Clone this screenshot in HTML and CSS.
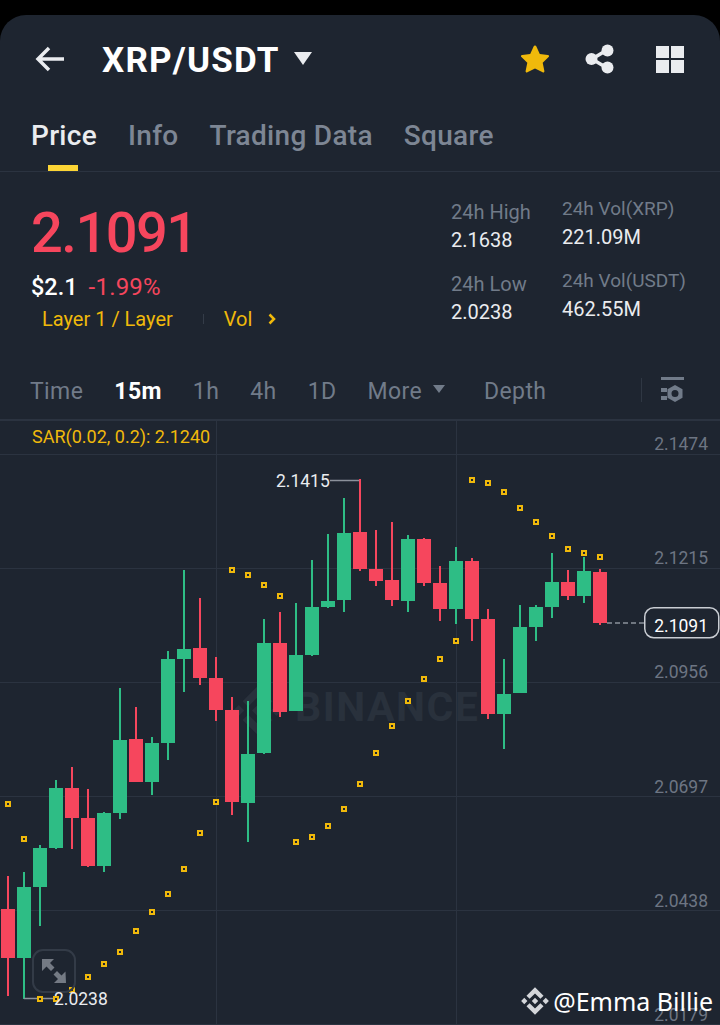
FILE: index.html
```html
<!DOCTYPE html>
<html lang="en">

<head>
    <meta charset="UTF-8">
    <meta name="viewport" content="width=device-width, initial-scale=1.0">
    <title>XRP/USDT</title>
    <link rel="stylesheet" href="styles.css">
</head>

<body>
    <div class="screen">
        <div class="topbar">
            <svg class="back" viewBox="0 0 30 26"><path d="M29 13H3M14 2L3 13l11 11"/></svg>
            <div class="pair">XRP/USDT</div>
            <div class="caret"></div>
            <div class="top_icons">
                <svg class="star" viewBox="0 0 30 30"><path d="M15 1.500c.7 0 1.100.4 1.400 1l3.400 7.500 8 .9c1.300.2 1.700 1.300.8 2.200l-5.900 5.600 1.700 8.200c.2 1.200-.8 1.900-1.800 1.300L15 24.600l-7.600 3.600c-1 .6-2-.1-1.800-1.300l1.700-8.200-5.900-5.600c-.9-.9-.5-2 .8-2.200l8-.9 3.400-7.500c.3-.6.700-1 1.400-1z"/></svg>
                <svg class="share" viewBox="0 0 30 30"><path d="M7 15L22 6M7 15l15 9"/><circle cx="6.500" cy="15" r="6"/><circle cx="22.500" cy="6.500" r="6"/><circle cx="22.500" cy="23.500" r="6"/></svg>
                <div class="grid_icon"><span></span><span></span><span></span><span></span></div>
            </div>
        </div>

        <ul class="tabs">
            <li class="active">Price</li>
            <li>Info</li>
            <li>Trading Data</li>
            <li>Square</li>
        </ul>

        <div class="summary">
            <div class="price_box">
                <div class="last">2.1091</div>
                <div class="sub"><span class="usd">$2.1</span><span class="pct">-1.99%</span></div>
                <div class="tags">
                    <span>Layer 1 / Layer</span>
                    <i class="sep"></i>
                    <span>Vol</span>
                    <svg class="chev" viewBox="0 0 8 12"><path d="M1.500 1.500L6 6l-4.500 4.500"/></svg>
                </div>
            </div>
            <div class="stats">
                <dl>
                    <dt>24h High</dt>
                    <dd>2.1638</dd>
                    <dt>24h Low</dt>
                    <dd>2.0238</dd>
                </dl>
                <dl class="stats_vol">
                    <dt>24h Vol(XRP)</dt>
                    <dd>221.09M</dd>
                    <dt>24h Vol(USDT)</dt>
                    <dd>462.55M</dd>
                </dl>
            </div>
        </div>

        <ul class="times">
            <li>Time</li>
            <li class="on">15m</li>
            <li>1h</li>
            <li>4h</li>
            <li>1D</li>
            <li class="more">More<i class="caret_sm"></i></li>
            <li class="depth">Depth</li>
            <li class="tools">
                <svg viewBox="0 0 24 26"><path d="M1 0h23v3H1zM1 11h6v4H1zM1 19h6v4H1z"/><path fill-rule="evenodd" d="M15 8l7.500 4.300v8.400L15 25l-7.500-4.300v-8.400zM15 13a3.500 3.500 0 100 7 3.500 3.500 0 000-7z"/></svg>
            </li>
        </ul>

        <div class="chart">
            <svg class="plot" viewBox="0 421 720 604">
                <defs>
                    <g id="bn">
                        <path d="M38.730 53.200L63 28.930l24.280 24.280 14.120-14.120L63 .69 24.610 39.080zM.6 63l14.120-14.120L28.840 63 14.720 77.120zM38.730 72.800L63 97.070l24.280-24.280 14.120 14.110L63 125.310 24.610 86.920zM97.280 63l14.120-14.120L125.520 63 111.400 77.120zM63 48.700L77.300 63 63 77.300 48.700 63z"/>
                    </g>
                </defs>

                <!-- grid -->
                <path class="grid" d="M0 454.500H720M0 568.500H720M0 682.500H720M0 796.500H720M0 910.500H720M0 1024.500H720M216.500 421V1025M456.500 421V1025"/>

                <!-- watermark -->
                <use class="wm" href="#bn" transform="translate(233 686) scale(.39)"/>
                <text class="wm" x="295" y="721">BINANCE</text>

                <!-- candles -->
                <g class="down"><rect class="wick" x="7" y="876" height="120"/><rect class="body" x="1" y="909" height="49"/></g>
                <g class="up"><rect class="wick" x="23" y="872" height="127"/><rect class="body" x="17" y="887" height="71"/></g>
                <g class="up"><rect class="wick" x="39" y="845" height="81"/><rect class="body" x="33" y="848" height="39"/></g>
                <g class="up"><rect class="wick" x="55" y="780" height="69"/><rect class="body" x="49" y="788" height="60"/></g>
                <g class="down"><rect class="wick" x="71" y="767" height="82"/><rect class="body" x="65" y="788" height="30"/></g>
                <g class="down"><rect class="wick" x="87" y="789" height="78"/><rect class="body" x="81" y="818" height="48"/></g>
                <g class="up"><rect class="wick" x="103" y="812" height="60"/><rect class="body" x="97" y="813" height="53"/></g>
                <g class="up"><rect class="wick" x="119" y="688" height="131"/><rect class="body" x="113" y="740" height="73"/></g>
                <g class="down"><rect class="wick" x="135" y="707" height="75"/><rect class="body" x="129" y="739" height="43"/></g>
                <g class="up"><rect class="wick" x="151" y="737" height="58"/><rect class="body" x="145" y="743" height="39"/></g>
                <g class="up"><rect class="wick" x="167" y="651" height="109"/><rect class="body" x="161" y="659" height="84"/></g>
                <g class="up"><rect class="wick" x="183" y="570" height="122"/><rect class="body" x="177" y="649" height="10"/></g>
                <g class="down"><rect class="wick" x="199" y="598" height="87"/><rect class="body" x="193" y="648" height="30"/></g>
                <g class="down"><rect class="wick" x="215" y="657" height="64"/><rect class="body" x="209" y="678" height="32"/></g>
                <g class="down"><rect class="wick" x="231" y="697" height="118"/><rect class="body" x="225" y="710" height="92"/></g>
                <g class="up"><rect class="wick" x="247" y="701" height="141"/><rect class="body" x="241" y="754" height="49"/></g>
                <g class="up"><rect class="wick" x="263" y="619" height="135"/><rect class="body" x="257" y="643" height="110"/></g>
                <g class="down"><rect class="wick" x="279" y="612" height="105"/><rect class="body" x="273" y="643" height="69"/></g>
                <g class="up"><rect class="wick" x="295" y="603" height="108"/><rect class="body" x="289" y="655" height="56"/></g>
                <g class="up"><rect class="wick" x="311" y="560" height="96"/><rect class="body" x="305" y="607" height="48"/></g>
                <g class="up"><rect class="wick" x="327" y="534" height="74"/><rect class="body" x="321" y="601" height="6"/></g>
                <g class="up"><rect class="wick" x="343" y="498" height="114"/><rect class="body" x="337" y="533" height="67"/></g>
                <g class="down"><rect class="wick" x="359" y="479" height="92"/><rect class="body" x="353" y="532" height="37"/></g>
                <g class="down"><rect class="wick" x="375" y="530" height="56"/><rect class="body" x="369" y="569" height="12"/></g>
                <g class="down"><rect class="wick" x="391" y="522" height="84"/><rect class="body" x="385" y="580" height="20"/></g>
                <g class="up"><rect class="wick" x="407" y="535" height="77"/><rect class="body" x="401" y="539" height="62"/></g>
                <g class="down"><rect class="wick" x="423" y="538" height="48"/><rect class="body" x="417" y="539" height="44"/></g>
                <g class="down"><rect class="wick" x="439" y="566" height="55"/><rect class="body" x="433" y="583" height="26"/></g>
                <g class="up"><rect class="wick" x="455" y="547" height="77"/><rect class="body" x="449" y="561" height="48"/></g>
                <g class="down"><rect class="wick" x="471" y="558" height="83"/><rect class="body" x="465" y="561" height="58"/></g>
                <g class="down"><rect class="wick" x="487" y="609" height="110"/><rect class="body" x="481" y="619" height="95"/></g>
                <g class="up"><rect class="wick" x="503" y="659" height="90"/><rect class="body" x="497" y="694" height="20"/></g>
                <g class="up"><rect class="wick" x="519" y="605" height="88"/><rect class="body" x="513" y="627" height="66"/></g>
                <g class="up"><rect class="wick" x="535" y="605" height="36"/><rect class="body" x="529" y="607" height="20"/></g>
                <g class="up"><rect class="wick" x="551" y="553" height="65"/><rect class="body" x="545" y="582" height="25"/></g>
                <g class="down"><rect class="wick" x="567" y="570" height="30"/><rect class="body" x="561" y="582" height="14"/></g>
                <g class="up"><rect class="wick" x="583" y="557" height="46"/><rect class="body" x="577" y="571" height="25"/></g>
                <g class="down"><rect class="wick" x="599" y="569" height="56"/><rect class="body" x="593" y="572" height="51"/></g>

                <!-- high / low marks -->
                <path class="mark" d="M330 480.500H359M24 998.500H54"/>
                <text class="mark_text" x="276" y="487">2.1415</text>

                <!-- SAR dots -->
                <rect class="sar" x="6" y="802"/><rect class="sar" x="22" y="837"/><rect class="sar" x="38" y="997"/><rect class="sar" x="54" y="997"/>
                <rect class="sar" x="70" y="988"/><rect class="sar" x="86" y="975"/><rect class="sar" x="102" y="962"/><rect class="sar" x="118" y="950"/>
                <rect class="sar" x="134" y="929"/><rect class="sar" x="150" y="910"/><rect class="sar" x="166" y="892"/><rect class="sar" x="182" y="867"/>
                <rect class="sar" x="198" y="831"/><rect class="sar" x="214" y="800"/><rect class="sar" x="230" y="568"/><rect class="sar" x="246" y="573"/>
                <rect class="sar" x="262" y="583"/><rect class="sar" x="278" y="594"/><rect class="sar" x="294" y="840"/><rect class="sar" x="310" y="835"/>
                <rect class="sar" x="326" y="824"/><rect class="sar" x="342" y="807"/><rect class="sar" x="358" y="782"/><rect class="sar" x="374" y="751"/>
                <rect class="sar" x="390" y="724"/><rect class="sar" x="406" y="699"/><rect class="sar" x="422" y="677"/><rect class="sar" x="438" y="657"/>
                <rect class="sar" x="454" y="639"/><rect class="sar" x="470" y="478"/><rect class="sar" x="486" y="481"/><rect class="sar" x="502" y="490"/>
                <rect class="sar" x="518" y="506"/><rect class="sar" x="534" y="520"/><rect class="sar" x="550" y="534"/><rect class="sar" x="566" y="547"/>
                <rect class="sar" x="582" y="551"/><rect class="sar" x="598" y="555"/>

                <!-- expand button -->
                <rect class="expand" x="33" y="950" width="42" height="42" rx="10"/>
                <path class="expand_arrow" d="M42 959h12l-4 4 4.500 4.500-3.500 3.500-4.500-4.500-4.500 4.500zM66 983H54l4-4-4.500-4.500 3.500-3.500 4.500 4.500 4-4z"/>
                <text class="mark_text" x="54" y="1005">2.0238</text>

                <!-- axis -->
                <text class="axis" x="708" y="450">2.1474</text>
                <text class="axis" x="708" y="564">2.1215</text>
                <text class="axis" x="708" y="678">2.0956</text>
                <text class="axis" x="708" y="793">2.0697</text>
                <text class="axis" x="708" y="907">2.0438</text>
                <text class="axis" x="708" y="1021">2.0179</text>

                <!-- last price -->
                <path class="last_line" d="M607 623H644"/>
                <rect class="last_tag" x="644.750" y="607.750" width="74" height="30" rx="9"/>
                <text class="last_text" x="708" y="632">2.1091</text>
            </svg>

            <div class="sar_label">SAR(0.02, 0.2): 2.1240</div>

            <div class="credit">
                <svg viewBox="0 0 126 126"><use href="#bn"/></svg>
                <span>@Emma Billie</span>
            </div>
        </div>
    </div>
</body>

</html>
```

FILE: styles.css
```css
* {
    padding: 0;
    margin: 0;
    list-style: none;
    box-sizing: border-box;
}

html,
body {
    background: #000;
    overflow: hidden;
}

body {
    font-family: Roboto, "Noto Sans", sans-serif;
    color: #eaecef;
}

.screen {
    height: 1010px;
    margin-top: 15px;
    background: #1e2530;
    border-radius: 26px 26px 0 0;
    overflow: hidden;
}

/* top bar */
.topbar {
    display: flex;
    align-items: center;
    height: 90px;
    padding: 0 36px 0 35px;
}

.back {
    width: 30px;
    height: 26px;
    margin: -2px 37px 0 0;
    fill: none;
    stroke: #eaecef;
    stroke-width: 3.5;
}

.pair {
    font-size: 35px;
    font-weight: 700;
    letter-spacing: 1.200px;
    color: #fff;
}

.caret {
    width: 0;
    height: 0;
    margin: -3px 0 0 14px;
    border-left: 9.500px solid transparent;
    border-right: 9.500px solid transparent;
    border-top: 13px solid #eaecef;
}

.top_icons {
    display: flex;
    align-items: center;
    margin: -2px 0 0 auto;
}

.star {
    width: 30px;
    height: 30px;
    fill: #f0b90b;
}

.share {
    width: 30px;
    height: 30px;
    margin-left: 35px;
    fill: #eaecef;
    stroke: #eaecef;
    stroke-width: 0;
}

.share path {
    fill: none;
    stroke-width: 3.5;
}

.grid_icon {
    display: grid;
    grid-template-columns: 13px 13px;
    grid-template-rows: 12.500px 12.500px;
    gap: 2px;
    margin-left: 41px;
}

.grid_icon span {
    background: #eaecef;
}

/* tabs */
.tabs {
    display: flex;
    gap: 31px;
    height: 67px;
    padding: 14px 0 0 31px;
    border-bottom: 1px solid #2b3340;
    font-size: 28px;
    font-weight: 500;
    letter-spacing: .3px;
    color: #7d8694;
}

.tabs li {
    position: relative;
}

.tabs .active {
    color: #eaecef;
}

.tabs .active::after {
    content: "";
    position: absolute;
    left: 17px;
    bottom: 0;
    width: 30px;
    height: 6px;
    background: #fcd535;
}

/* price summary */
.summary {
    display: flex;
    height: 189px;
}

.price_box {
    width: 451px;
    padding: 28px 0 0 31px;
}

.last {
    font-size: 56px;
    font-weight: 500;
    line-height: 66px;
    letter-spacing: -1.500px;
    color: #f6465d;
}

.sub {
    display: flex;
    align-items: center;
    gap: 11px;
    height: 32px;
    margin-top: 5px;
}

.usd {
    font-size: 23.500px;
    font-weight: 500;
    color: #fff;
}

.pct {
    font-size: 24px;
    letter-spacing: .2px;
    color: #f6465d;
}

.tags {
    display: flex;
    align-items: center;
    height: 30px;
    margin: 1px 0 0 11px;
    font-size: 20px;
    color: #f0b90b;
}

.sep {
    width: 1px;
    height: 10px;
    margin: 0 20px 0 30px;
    background: #343c48;
}

.chev {
    width: 8px;
    height: 12px;
    margin-left: 16px;
    fill: none;
    stroke: #f0b90b;
    stroke-width: 2.500;
}

.stats {
    display: flex;
    padding-top: 26px;
}

.stats dl {
    width: 111px;
    white-space: nowrap;
}

.stats_vol {
    margin-top: -3px;
}

.stats dt {
    height: 28px;
    font-size: 20px;
    line-height: 28px;
    color: #717b89;
}

.stats_vol dt {
    font-size: 19px;
}

.stats dd {
    height: 44px;
    font-size: 20px;
    line-height: 28px;
    color: #eaecef;
}

/* interval row */
.times {
    display: flex;
    align-items: center;
    height: 60px;
    padding: 2px 0 0 30px;
    border-bottom: 2px solid #2b3340;
    font-size: 23px;
    letter-spacing: .4px;
    color: #717b89;
}

.times li {
    margin-right: 31px;
}

.times .on {
    font-weight: 700;
    color: #fff;
}

.times .more {
    display: flex;
    align-items: center;
    margin-right: 39px;
}

.caret_sm {
    width: 0;
    height: 0;
    margin: -4px 0 0 11px;
    border-left: 6.500px solid transparent;
    border-right: 6.500px solid transparent;
    border-top: 8px solid #717b89;
}

.times .tools {
    display: flex;
    align-items: center;
    height: 24px;
    margin: -2px 0 0 auto;
    padding: 0 36px 0 18px;
    border-left: 1px solid #2f3743;
}

.tools svg {
    width: 24px;
    height: 26px;
    fill: #717b89;
}

/* chart */
.chart {
    position: relative;
    height: 604px;
}

.plot {
    position: absolute;
    left: 0;
    top: 0;
    width: 720px;
    height: 604px;
}

.grid {
    fill: none;
    stroke: #2b3340;
    stroke-width: 1;
}

.wm {
    font-size: 41px;
    font-weight: 700;
    letter-spacing: 1.500px;
    fill: #29313c;
}

.up {
    fill: #2ebd85;
}

.down {
    fill: #f6465d;
}

.wick {
    width: 2px;
}

.body {
    width: 14px;
}

.mark {
    fill: none;
    stroke: #8b919b;
    stroke-width: 1.500;
}

.mark_text {
    font-size: 17.500px;
    fill: #eaecef;
}

.sar {
    width: 4px;
    height: 4px;
    fill: #1e2530;
    stroke: #f0b90b;
    stroke-width: 2;
}

.expand {
    fill: none;
    stroke: #333b47;
    stroke-width: 2;
}

.expand_arrow {
    fill: #747a84;
}

.axis {
    font-size: 17.500px;
    text-anchor: end;
    fill: #6d7583;
}

.last_line {
    fill: none;
    stroke: #8b919b;
    stroke-width: 1.500;
    stroke-dasharray: 5 3;
}

.last_tag {
    fill: #1e2530;
    stroke: #c9cdd3;
    stroke-width: 1.500;
}

.last_text {
    font-size: 17.500px;
    text-anchor: end;
    fill: #fff;
}

.sar_label {
    position: absolute;
    left: 32px;
    top: 6px;
    font-size: 18px;
    line-height: 20px;
    color: #f0b90b;
}

.credit {
    position: absolute;
    right: 7px;
    bottom: 7px;
    display: flex;
    align-items: center;
    gap: 4px;
    font-family: "Noto Sans", sans-serif;
    font-size: 25px;
    line-height: 34px;
    color: #fff;
}

.credit svg {
    width: 28px;
    height: 28px;
    fill: #d4d6da;
}
```
